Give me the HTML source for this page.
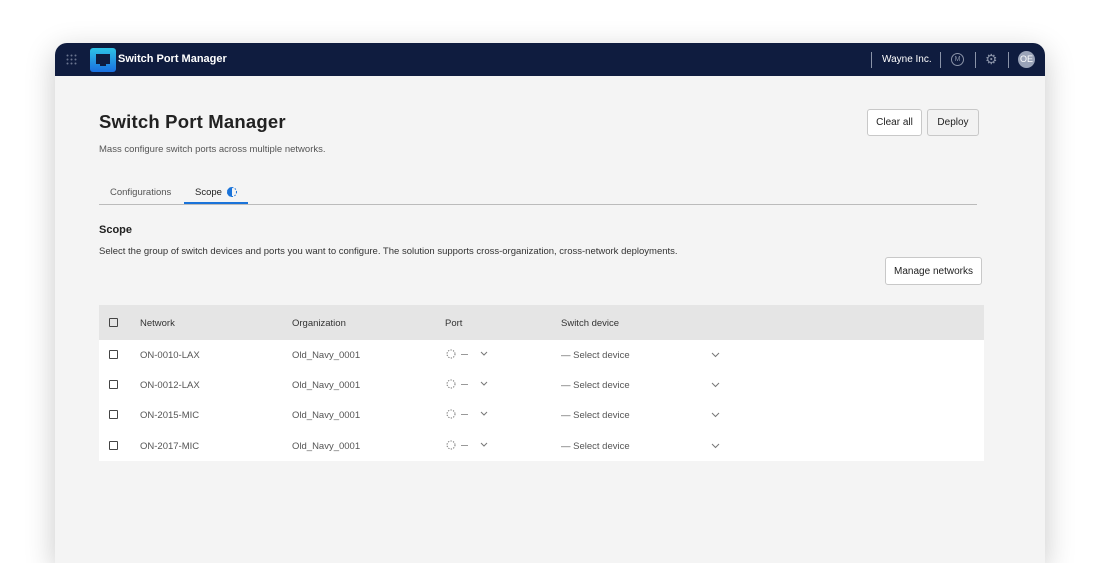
<!DOCTYPE html>
<html><head><style>
*{box-sizing:border-box;margin:0;padding:0}
body{width:1100px;height:550px;background:#fff;font-family:"Liberation Sans",sans-serif;position:relative;overflow:hidden;color:#222}
.win{position:absolute;left:55px;top:43px;width:990px;height:520px;background:#f4f4f4;border-radius:12px 12px 0 0;box-shadow:0 8px 30px rgba(0,0,0,.22);overflow:hidden}
.hdr{position:absolute;left:0;top:0;width:990px;height:33px;background:#0f1c3f;color:#fff}
.a{position:absolute;font-size:9.5px;color:#444;white-space:nowrap}
.btn{position:absolute;background:#fff;border:1px solid #c8c8c8;border-radius:3px;font-size:10px;color:#222;display:flex;align-items:center;justify-content:center}
.cb{position:absolute;width:9px;height:9px;border:1.2px solid #444;border-radius:1px}
.sep{position:absolute;top:9px;width:1px;height:16px;background:#8a93a8}
</style></head><body>
<div class="win">
 <div class="hdr">
  <svg style="position:absolute;left:11px;top:11px" width="12" height="12" fill="#6b7590"><circle cx="1.5" cy="1.5" r="1"/><circle cx="5.5" cy="1.5" r="1"/><circle cx="9.5" cy="1.5" r="1"/><circle cx="1.5" cy="5.5" r="1"/><circle cx="5.5" cy="5.5" r="1"/><circle cx="9.5" cy="5.5" r="1"/><circle cx="1.5" cy="9.5" r="1"/><circle cx="5.5" cy="9.5" r="1"/><circle cx="9.5" cy="9.5" r="1"/></svg>
  <svg style="position:absolute;left:35px;top:5px" width="26" height="24"><defs><linearGradient id="g" x1="0" y1="0" x2="0" y2="1"><stop offset="0" stop-color="#2ec3e6"/><stop offset="1" stop-color="#1a6fe0"/></linearGradient></defs><rect width="26" height="24" rx="3" fill="url(#g)"/><path d="M6 6h14v10h-4v2h-6v-2h-4z" fill="#0f1c3f"/></svg>
  <div style="position:absolute;left:63px;top:10px;font-size:11px;font-weight:bold">Switch Port Manager</div>
  <div class="sep" style="left:816px"></div>
  <div style="position:absolute;left:827px;top:11px;font-size:10px">Wayne Inc.</div>
  <div class="sep" style="left:885px"></div>
  <div style="position:absolute;left:896px;top:10px;width:13px;height:13px;border:1.2px solid #8a93a8;border-radius:50%;font-size:7px;color:#8a93a8;text-align:center;line-height:11px">M</div>
  <div class="sep" style="left:920px"></div>
  <div style="position:absolute;left:930px;top:8px;font-size:14px;color:#8a93a8">⚙</div>
  <div class="sep" style="left:953px"></div>
  <div style="position:absolute;left:963px;top:8px;width:17px;height:17px;border-radius:50%;background:#9aa3b8;font-size:9px;color:#fff;text-align:center;line-height:17px">OE</div>
 </div>
 <div style="position:absolute;left:44px;top:68px;font-size:18.5px;font-weight:bold;color:#222;letter-spacing:.2px">Switch Port Manager</div>
 <div class="a" style="left:44px;top:101px;font-size:9.5px;color:#555">Mass configure switch ports across multiple networks.</div>
 <div class="btn" style="left:812px;top:66px;width:55px;height:27px">Clear all</div>
 <div class="btn" style="left:872px;top:66px;width:52px;height:27px;background:#f2f2f2">Deploy</div>
 <div class="a" style="left:55px;top:144px;color:#555">Configurations</div>
 <div class="a" style="left:140px;top:144px;color:#222">Scope</div>
 <svg style="position:absolute;left:171px;top:143px" width="12" height="12"><path d="M6 1a5 5 0 0 0 0 10z" fill="#1a73d9"/><circle cx="6" cy="6" r="4.5" fill="none" stroke="#1a73d9" stroke-dasharray="1.5 1.5"/></svg>
 <div style="position:absolute;left:44px;top:161px;width:878px;height:1px;background:#bbb"></div>
 <div style="position:absolute;left:129px;top:159px;width:64px;height:2px;background:#1a73d9"></div>
 <div class="a" style="left:44px;top:181px;font-size:11px;font-weight:bold;color:#222">Scope</div>
 <div class="a" style="left:44px;top:203px;color:#333">Select the group of switch devices and ports you want to configure. The solution supports cross-organization, cross-network deployments.</div>
 <div class="btn" style="left:830px;top:214px;width:97px;height:28px">Manage networks</div>
 <div style="position:absolute;left:44px;top:262px;width:885px;height:35px;background:#e5e5e5"></div>
 <div style="position:absolute;left:44px;top:297px;width:885px;height:121px;background:#fff"></div>
 <div class="cb" style="left:54px;top:275px"></div>
 <div class="a" style="left:85px;top:275px;color:#333">Network</div>
 <div class="a" style="left:237px;top:275px;color:#333">Organization</div>
 <div class="a" style="left:390px;top:275px;color:#333">Port</div>
 <div class="a" style="left:506px;top:275px;color:#333">Switch device</div>
</div>
<script>
var n=["ON-0010-LAX","ON-0012-LAX","ON-2015-MIC","ON-2017-MIC"],y=[355,385,415,446],h="";
for(var i=0;i<4;i++){var t=y[i]-43-5;
h+='<div class="cb" style="left:54px;top:'+(t)+'px"></div><div class="a" style="left:85px;top:'+t+'px;color:#555">'+n[i]+'</div><div class="a" style="left:237px;top:'+t+'px;color:#555">Old_Navy_0001</div>'+
'<svg style="position:absolute;left:390px;top:'+(t-2)+'px" width="50" height="12"><circle cx="6" cy="6" r="4" fill="none" stroke="#777" stroke-dasharray="1.3 1.3"/><path d="M16 6.5h7" stroke="#999"/><path d="M36 4l3 3 3-3" fill="none" stroke="#777"/></svg>'+
'<div class="a" style="left:506px;top:'+t+'px;color:#555">— Select device</div><svg style="position:absolute;left:656px;top:'+(t+1)+'px" width="10" height="8"><path d="M1 2l3.5 3.5L8 2" fill="none" stroke="#777"/></svg>';}
document.querySelector('.win').insertAdjacentHTML('beforeend',h);
</script>
</body></html>
